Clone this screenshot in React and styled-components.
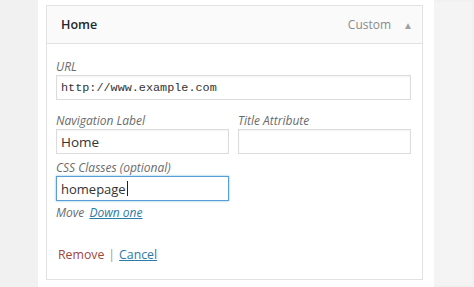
import React from 'react';
import styled, { createGlobalStyle } from 'styled-components';

const GlobalStyle = createGlobalStyle`
  html, body {
    margin: 0;
    padding: 0;
    background: #f1f1f1;
  }
  body {
    font-family: "Open Sans", "Noto Sans", sans-serif;
    color: #23282d;
  }
`;

const App = () => {
  return (
    <Page>
      <GlobalStyle />
      <Gutter />
      <Main>
        <Card>
          <Header>
            <Title>Home</Title>
            <Controls>
              <ItemType>Custom</ItemType>
              <Toggle>&#9650;</Toggle>
            </Controls>
          </Header>
          <Body>
            <Field>
              <Label>URL</Label>
              <Input mono defaultValue="http://www.example.com" />
            </Field>
            <Row>
              <Field>
                <Label>Navigation Label</Label>
                <Input defaultValue="Home" />
              </Field>
              <Field>
                <Label>Title Attribute</Label>
                <Input defaultValue="" />
              </Field>
            </Row>
            <HalfRow>
              <Field>
                <Label>CSS Classes (optional)</Label>
                <FocusedInput>
                  homepage<Caret />
                </FocusedInput>
              </Field>
            </HalfRow>
            <MoveLine>
              Move <Link href="#">Down one</Link>
            </MoveLine>
            <Actions>
              <RemoveLink href="#">Remove</RemoveLink>
              <Sep>|</Sep>
              <Link href="#">Cancel</Link>
            </Actions>
          </Body>
        </Card>
      </Main>
      <SidePanel />
    </Page>
  );
};

const Page = styled.div`
  display: flex;
  width: 474px;
  height: 287px;
  overflow: hidden;
`;

const Gutter = styled.div`
  width: 38px;
  flex: none;
  background: #f1f1f1;
`;

const Main = styled.div`
  width: 396px;
  flex: none;
  background: #fff;
  padding: 5px 11px 0 8px;
  box-sizing: border-box;
`;

const SidePanel = styled.div`
  width: 38px;
  flex: none;
  margin: 2px 2px 2px 0;
  background: #f4f4f4;
`;

const Card = styled.div`
  border: 1px solid #e2e2e2;
  height: 275px;
  box-sizing: border-box;
  background: #fff;
`;

const Header = styled.div`
  display: flex;
  align-items: center;
  justify-content: space-between;
  height: 37px;
  border-bottom: 1px solid #e2e2e2;
  background: #fafafa;
  padding: 0 9px 0 14px;
`;

const Title = styled.div`
  font-size: 12.5px;
  font-weight: 600;
  color: #23282d;
`;

const Controls = styled.div`
  display: flex;
  align-items: center;
  gap: 12px;
`;

const ItemType = styled.span`
  font-size: 12px;
  color: #8a8a8a;
`;

const Toggle = styled.span`
  font-size: 10px;
  color: #a0a0a0;
`;

const Body = styled.div`
  padding: 14px 11px 0 9px;
  display: flex;
  flex-direction: column;
`;

const Field = styled.div`
  display: flex;
  flex-direction: column;
  flex: 1;
  min-width: 0;
`;

const Label = styled.label`
  font-size: 12px;
  font-style: italic;
  line-height: 17px;
  color: #6b6b6b;
`;

const Input = styled.input`
  box-sizing: border-box;
  height: 25px;
  width: 100%;
  margin: 0;
  border: 1px solid #dcdcdc;
  box-shadow: inset 0 1px 2px rgba(0, 0, 0, 0.05);
  padding: 0 4px;
  font-family: ${p => (p.mono ? '"Liberation Mono", "DejaVu Sans Mono", monospace' : '"Open Sans", sans-serif')};
  font-size: ${p => (p.mono ? '11.8px' : '13.5px')};
  color: #333;
  outline: none;
`;

const FocusedInput = styled.div`
  box-sizing: border-box;
  height: 25px;
  display: flex;
  align-items: center;
  border: 1px solid #5b9dd9;
  box-shadow: 0 0 2px rgba(30, 140, 190, 0.6);
  padding: 0 4px;
  font-size: 13px;
  color: #333;
`;

const Caret = styled.span`
  display: inline-block;
  width: 1px;
  height: 15px;
  background: #222;
  margin-left: 1px;
`;

const Row = styled.div`
  display: flex;
  gap: 9px;
  margin-top: 12px;
`;

const HalfRow = styled.div`
  display: flex;
  width: 173px;
  margin-top: 5px;
`;

const MoveLine = styled.div`
  margin-top: 3px;
  font-size: 12px;
  font-style: italic;
  line-height: 17px;
  color: #6b6b6b;
`;

const Link = styled.a`
  color: #2b7ba6;
  text-decoration: underline;
  margin-left: 2px;
`;

const Actions = styled.div`
  display: flex;
  align-items: center;
  gap: 4px;
  margin-top: 25px;
  padding-left: 2px;
  font-size: 12.3px;
  line-height: 17px;
  ${Link} {
    margin-left: 0;
  }
`;

const RemoveLink = styled.a`
  color: #a0463c;
  text-decoration: none;
`;

const Sep = styled.span`
  color: #999;
`;

export default App;
